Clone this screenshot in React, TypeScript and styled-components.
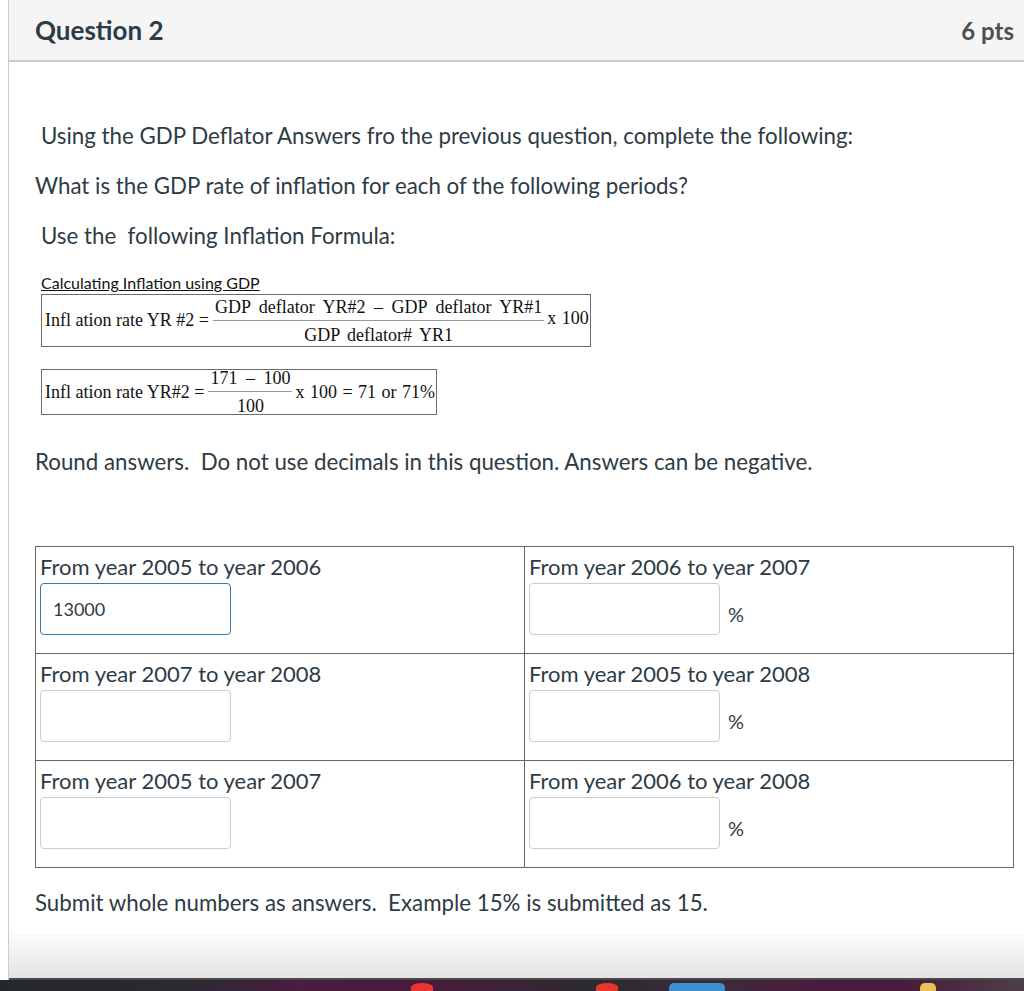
import React from "react";
import styled, { createGlobalStyle } from "styled-components";

const GlobalStyle = createGlobalStyle`
  html, body {
    margin: 0;
    padding: 0;
    height: 100%;
    overflow: hidden;
    background: #ffffff;
  }
  #root {
    height: 100%;
  }
`;

const Screen = styled.div`
  display: flex;
  flex-direction: column;
  height: 991px;
  font-family: Lato, "Open Sans", sans-serif;
  color: #2d3b45;
`;

const Panel = styled.div`
  flex: 1;
  min-height: 0;
  display: flex;
  flex-direction: column;
  margin-left: 8px;
  border-left: 1px solid #c7cdd1;
  overflow: hidden;
`;

const Header = styled.div`
  flex: none;
  display: flex;
  align-items: center;
  justify-content: space-between;
  height: 60px;
  padding: 0 10px 0 26px;
  background: #f5f5f5;
  border-bottom: 2px solid #c7cdd1;
`;

const Title = styled.h2`
  margin: 0;
  font-size: 26px;
  font-weight: 700;
  color: #2d3b45;
`;

const Points = styled.span`
  font-size: 24px;
  font-weight: 700;
  color: #4a4f53;
`;

const Body = styled.div`
  flex: 1;
  min-height: 0;
  padding: 59px 10px 0 26px;
`;

const Para = styled.p<{ $indent?: boolean; $last?: boolean }>`
  margin: 0 0 ${(p) => (p.$last ? "0" : "20px")};
  padding-left: ${(p) => (p.$indent ? "6px" : "0")};
  font-size: 22.3px;
  line-height: 30px;
`;

const Caption = styled.div`
  margin: 22px 0 0 6px;
  font-family: Lato, "Open Sans", sans-serif;
  font-size: 16px;
  line-height: 19px;
  color: #111;
  text-decoration: underline;
`;

const FormulaBlock = styled.div<{ $top: number }>`
  margin-top: ${(p) => p.$top}px;
`;

const FormulaBox = styled.div<{ $height: number }>`
  display: inline-flex;
  align-items: center;
  height: ${(p) => p.$height}px;
  margin-left: 6px;
  padding: 0 1px 0 3px;
  border: 1px solid #6b6b6b;
  font-family: "Liberation Serif", "Times New Roman", serif;
  font-size: 18px;
  color: #111;
  white-space: nowrap;
`;

const Lead = styled.span`
  word-spacing: 0;
`;

const Fraction = styled.span`
  display: inline-flex;
  flex-direction: column;
  align-items: center;
  margin: 0 3px 0 4px;
  line-height: 20px;
`;

const Numerator = styled.span`
  padding: 0 2px 3px;
  border-bottom: 1px solid #999;
  word-spacing: 4px;
`;

const Denominator = styled.span`
  padding-top: 4px;
  word-spacing: 3px;
`;

const Tail = styled.span<{ $raise?: boolean }>`
  position: relative;
  top: ${(p) => (p.$raise ? "-2px" : "0")};
  word-spacing: 1px;
`;

const Note = styled.p<{ $top: number }>`
  margin: ${(p) => p.$top}px 0 0;
  font-size: 22.3px;
  line-height: 30px;
`;

const AnswerTable = styled.table`
  width: 100%;
  margin-top: 69px;
  border-collapse: collapse;
  table-layout: fixed;
`;

const Cell = styled.td`
  width: 50%;
  padding: 4px 4px 18px;
  border: 1px solid #666;
  vertical-align: top;
`;

const CellLabel = styled.div`
  font-size: 22px;
  line-height: 32px;
`;

const InputRow = styled.div`
  display: flex;
  align-items: flex-end;
`;

const AnswerInput = styled.input<{ $active?: boolean }>`
  box-sizing: border-box;
  width: 191px;
  height: 52px;
  padding: 0 12px;
  border: 1px solid ${(p) => (p.$active ? "#2f79b8" : "#c7cdd1")};
  border-radius: 4px;
  background: #fff;
  font-family: Lato, sans-serif;
  font-size: 18px;
  color: #2d3b45;
  outline: none;
`;

const Unit = styled.span`
  margin: 0 0 11px 8px;
  font-size: 20px;
  line-height: 1;
`;

const Footer = styled.div`
  flex: none;
  height: 44px;
  background: linear-gradient(#fbfbfb, #e4e4e4);
  border-bottom: 2px solid #4a4a4a;
`;

const Taskbar = styled.div`
  flex: none;
  display: flex;
  align-items: flex-end;
  height: 11px;
  overflow: hidden;
  background: linear-gradient(
    90deg,
    #24272c 0%,
    #2a2a32 18%,
    #4c1c40 30%,
    #4b1b3c 40%,
    #2c2a30 58%,
    #3c2b3a 70%,
    #4b1b3d 80%,
    #4a1a3c 88%,
    #4c4048 100%
  );
`;

const DockIcon = styled.span<{ $left: number; $w: number; $color: string; $round?: boolean }>`
  flex: none;
  margin-left: ${(p) => p.$left}px;
  width: ${(p) => p.$w}px;
  height: 8px;
  background: ${(p) => p.$color};
  border-radius: ${(p) => (p.$round ? "50% 50% 0 0" : "5px 5px 0 0")};
`;

type Answer = { label: string; value?: string; unit?: boolean; active?: boolean };

const rows: Answer[][] = [
  [
    { label: "From year 2005 to year 2006", value: "13000", active: true },
    { label: "From year 2006 to year 2007", unit: true },
  ],
  [
    { label: "From year 2007 to year 2008" },
    { label: "From year 2005 to year 2008", unit: true },
  ],
  [
    { label: "From year 2005 to year 2007" },
    { label: "From year 2006 to year 2008", unit: true },
  ],
];

const AnswerCell: React.FC<{ answer: Answer }> = ({ answer }) => (
  <Cell>
    <CellLabel>{answer.label}</CellLabel>
    <InputRow>
      <AnswerInput type="text" defaultValue={answer.value} $active={answer.active} />
      {answer.unit && <Unit>%</Unit>}
    </InputRow>
  </Cell>
);

const App: React.FC = () => (
  <>
    <GlobalStyle />
    <Screen>
      <Panel>
        <Header>
          <Title>Question 2</Title>
          <Points>6 pts</Points>
        </Header>
        <Body>
          <Para $indent>
            Using the GDP Deflator Answers fro the previous question, complete the following:
          </Para>
          <Para>What is the GDP rate of inflation for each of the following periods?</Para>
          <Para $indent $last>
            Use the&nbsp; following Inflation Formula:
          </Para>

          <Caption>Calculating Inflation using GDP</Caption>
          <FormulaBlock $top={2}>
            <FormulaBox $height={51}>
              <Lead>Infl ation rate YR #2 =</Lead>
              <Fraction>
                <Numerator>GDP deflator YR#2 – GDP deflator YR#1</Numerator>
                <Denominator>GDP deflator# YR1</Denominator>
              </Fraction>
              <Tail $raise>x 100</Tail>
            </FormulaBox>
          </FormulaBlock>
          <FormulaBlock $top={22}>
            <FormulaBox $height={44}>
              <Lead>Infl ation rate YR#2 =</Lead>
              <Fraction>
                <Numerator>171 – 100</Numerator>
                <Denominator>100</Denominator>
              </Fraction>
              <Tail>x 100 = 71 or 71%</Tail>
            </FormulaBox>
          </FormulaBlock>

          <Note $top={32}>
            Round answers.&nbsp; Do not use decimals in this question. Answers can be negative.
          </Note>

          <AnswerTable>
            <tbody>
              {rows.map((row, i) => (
                <tr key={i}>
                  {row.map((a) => (
                    <AnswerCell key={a.label} answer={a} />
                  ))}
                </tr>
              ))}
            </tbody>
          </AnswerTable>

          <Note $top={20}>
            Submit whole numbers as answers.&nbsp; Example 15% is submitted as 15.
          </Note>
        </Body>
        <Footer />
      </Panel>
      <Taskbar>
        <DockIcon $left={411} $w={22} $color="#e8362f" $round />
        <DockIcon $left={163} $w={22} $color="#e8362f" $round />
        <DockIcon $left={51} $w={56} $color="#3d8fd0" />
        <DockIcon $left={195} $w={16} $color="#e8c35a" />
      </Taskbar>
    </Screen>
  </>
);

export default App;
